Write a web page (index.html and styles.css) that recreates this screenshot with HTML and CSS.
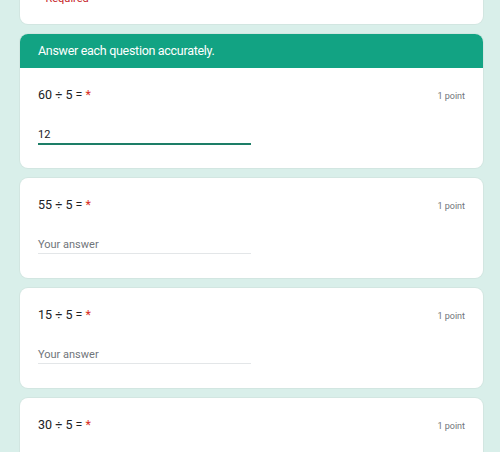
FILE: index.html
```html
<!DOCTYPE html>
<html>
<head>
<meta charset="utf-8">
<link rel="stylesheet" href="styles.css">
</head>
<body>
<div class="page">
  <div class="card top-card">
    <div class="required">* Required</div>
  </div>

  <div class="card section">
    <div class="section-head">Answer each question accurately.</div>
    <div class="q">
      <div class="q-row">
        <div class="q-title">60 ÷ 5 = <span class="star">*</span></div>
        <div class="points">1 point</div>
      </div>
      <div class="answer filled">12</div>
    </div>
  </div>

  <div class="card">
    <div class="q">
      <div class="q-row">
        <div class="q-title">55 ÷ 5 = <span class="star">*</span></div>
        <div class="points">1 point</div>
      </div>
      <div class="answer">Your answer</div>
    </div>
  </div>

  <div class="card">
    <div class="q">
      <div class="q-row">
        <div class="q-title">15 ÷ 5 = <span class="star">*</span></div>
        <div class="points">1 point</div>
      </div>
      <div class="answer">Your answer</div>
    </div>
  </div>

  <div class="card">
    <div class="q">
      <div class="q-row">
        <div class="q-title">30 ÷ 5 = <span class="star">*</span></div>
        <div class="points">1 point</div>
      </div>
      <div class="answer">Your answer</div>
    </div>
  </div>
</div>
</body>
</html>
```

FILE: styles.css
```css
html, body {
  margin: 0;
  padding: 0;
  background: #d9efea;
  font-family: Roboto, "Liberation Sans", sans-serif;
  overflow: hidden;
}

.page {
  width: 463px;
  margin: -16px 0 0 20px;
  display: flex;
  flex-direction: column;
  gap: 10px;
}

.card {
  background: #fff;
  border-radius: 8px;
  box-shadow: 0 0 0 1px #d2e6e1;
}

.top-card {
  height: 40px;
  padding: 0 0 0 18px;
  box-sizing: border-box;
}

.required {
  font-size: 11px;
  color: #c5221f;
  line-height: 14px;
  padding-top: 8px;
}

.section {
  overflow: hidden;
}

.section-head {
  background: #12a383;
  color: #fff;
  height: 34px;
  padding: 0 18px;
  font-size: 12.5px;
  letter-spacing: -0.3px;
  line-height: 34px;
}

.q {
  padding: 18px 18px 0 18px;
  height: 100px;
  box-sizing: border-box;
}

.q-row {
  display: flex;
  justify-content: space-between;
  align-items: baseline;
  height: 18px;
  line-height: 18px;
}

.q-title {
  font-size: 12.5px;
  color: #202124;
}

.star {
  color: #d93025;
}

.points {
  font-size: 9px;
  color: #70757a;
}

.answer {
  width: 213px;
  margin-top: 23px;
  font-size: 11px;
  color: #70757a;
  line-height: 15px;
  padding-bottom: 1px;
  border-bottom: 1px solid #e3e6e8;
}

.answer.filled {
  color: #202124;
  border-bottom: 2px solid #1d7e67;
  padding-bottom: 1px;
}
```
